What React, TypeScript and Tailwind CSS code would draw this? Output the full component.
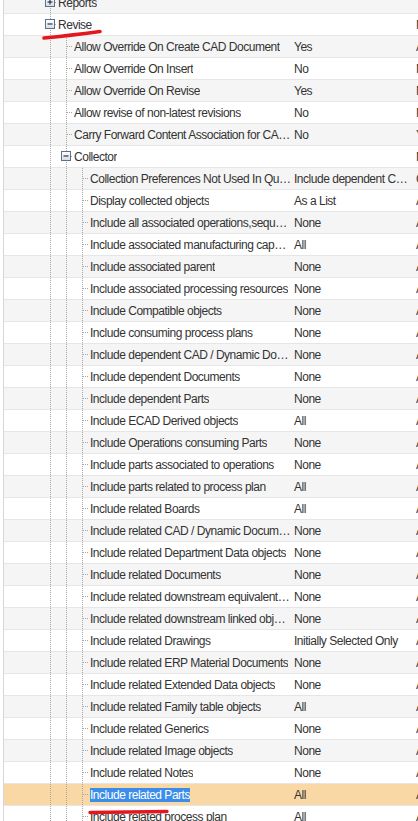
import React from "react";

type Row = {
  level: number;
  label: string;
  val?: string;
  c3?: string;
  icon?: "plus" | "minus";
  selected?: boolean;
};

const rows: Row[] = [
  { level: 0, label: "Reports", icon: "plus", c3: "" },
  { level: 0, label: "Revise", icon: "minus", c3: "N" },
  { level: 1, label: "Allow Override On Create CAD Document", val: "Yes", c3: "A" },
  { level: 1, label: "Allow Override On Insert", val: "No", c3: "N" },
  { level: 1, label: "Allow Override On Revise", val: "Yes", c3: "N" },
  { level: 1, label: "Allow revise of non-latest revisions", val: "No", c3: "N" },
  { level: 1, label: "Carry Forward Content Association for CA…", val: "No", c3: "Y" },
  { level: 1, label: "Collector", icon: "minus", c3: "N" },
  { level: 2, label: "Collection Preferences Not Used In Qu…", val: "Include dependent C…", c3: "C" },
  { level: 2, label: "Display collected objects", val: "As a List", c3: "A" },
  { level: 2, label: "Include all associated operations,sequ…", val: "None", c3: "A" },
  { level: 2, label: "Include associated manufacturing cap…", val: "All", c3: "A" },
  { level: 2, label: "Include associated parent", val: "None", c3: "A" },
  { level: 2, label: "Include associated processing resources", val: "None", c3: "A" },
  { level: 2, label: "Include Compatible objects", val: "None", c3: "A" },
  { level: 2, label: "Include consuming process plans", val: "None", c3: "A" },
  { level: 2, label: "Include dependent CAD / Dynamic Do…", val: "None", c3: "A" },
  { level: 2, label: "Include dependent Documents", val: "None", c3: "A" },
  { level: 2, label: "Include dependent Parts", val: "None", c3: "A" },
  { level: 2, label: "Include ECAD Derived objects", val: "All", c3: "A" },
  { level: 2, label: "Include Operations consuming Parts", val: "None", c3: "A" },
  { level: 2, label: "Include parts associated to operations", val: "None", c3: "A" },
  { level: 2, label: "Include parts related to process plan", val: "All", c3: "A" },
  { level: 2, label: "Include related Boards", val: "All", c3: "A" },
  { level: 2, label: "Include related CAD / Dynamic Docum…", val: "None", c3: "A" },
  { level: 2, label: "Include related Department Data objects", val: "None", c3: "A" },
  { level: 2, label: "Include related Documents", val: "None", c3: "A" },
  { level: 2, label: "Include related downstream equivalent…", val: "None", c3: "A" },
  { level: 2, label: "Include related downstream linked obj…", val: "None", c3: "A" },
  { level: 2, label: "Include related Drawings", val: "Initially Selected Only", c3: "A" },
  { level: 2, label: "Include related ERP Material Documents", val: "None", c3: "A" },
  { level: 2, label: "Include related Extended Data objects", val: "None", c3: "A" },
  { level: 2, label: "Include related Family table objects", val: "All", c3: "A" },
  { level: 2, label: "Include related Generics", val: "None", c3: "A" },
  { level: 2, label: "Include related Image objects", val: "None", c3: "A" },
  { level: 2, label: "Include related Notes", val: "None", c3: "A" },
  { level: 2, label: "Include related Parts", val: "All", c3: "A", selected: true },
  { level: 2, label: "Include related process plan", val: "All", c3: "A" },
];

const DOT = "#a8a8a8";

function Unit({ kind, icon }: { kind: "pipe" | "branch"; icon?: "plus" | "minus" }) {
  return (
    <svg width="16" height="21" viewBox="0 0 16 21" className="block shrink-0">
      <line x1="8.5" y1="0" x2="8.5" y2="21" stroke={DOT} strokeWidth="1" strokeDasharray="1 1" />
      {kind === "branch" && (
        <line x1="9" y1="10.5" x2="15" y2="10.5" stroke={DOT} strokeWidth="1" strokeDasharray="1 1" />
      )}
      {icon && (
        <g>
          <defs>
            <linearGradient id="boxg" x1="0" y1="0" x2="0" y2="1">
              <stop offset="0" stopColor="#ffffff" />
              <stop offset="1" stopColor="#d6dbe4" />
            </linearGradient>
          </defs>
          <rect x="3.5" y="5.5" width="9" height="9" fill="url(#boxg)" stroke="#5d6f8e" strokeWidth="1" />
          <line x1="5.5" y1="10" x2="10.5" y2="10" stroke="#2b3548" strokeWidth="1.2" />
          {icon === "plus" && (
            <line x1="8" y1="7.5" x2="8" y2="12.5" stroke="#2b3548" strokeWidth="1.2" />
          )}
        </g>
      )}
    </svg>
  );
}

function TreeRow({ r, idx }: { r: Row; idx: number }) {
  const bg = r.selected ? "bg-[#fad8a5]" : idx % 2 === 0 ? "bg-[#f5f5f5]" : "bg-white";
  const units: React.ReactNode[] = [];
  for (let i = 0; i < r.level; i++) units.push(<Unit key={i} kind="pipe" />);
  units.push(<Unit key="b" kind="branch" icon={r.icon} />);
  return (
    <div className={`flex h-[22px] items-center border-b border-[#e6e6e6] ${bg}`}>
      <div className="flex h-full w-[286px] shrink-0 items-center overflow-hidden pl-[38px]">
        {units}
        <span className="overflow-hidden whitespace-nowrap">
          {r.selected ? (
            <span className="bg-[#3b8de9] py-[1px] text-white">{r.label}</span>
          ) : (
            r.label
          )}
        </span>
      </div>
      <div className="w-[123px] shrink-0 overflow-hidden whitespace-nowrap pl-[4px]">{r.val ?? ""}</div>
      <div className="shrink-0 whitespace-nowrap pl-[3px]">{r.c3 ?? ""}</div>
    </div>
  );
}

export default function App() {
  return (
    <div
      className="relative h-[821px] w-[418px] overflow-hidden bg-white text-[12px] leading-[14px] tracking-[-0.48px] text-[#333333]"
      style={{ fontFamily: '"Liberation Sans", Arial, sans-serif' }}
    >
      <div className="ml-[3px] mt-[-8px] border-l border-[#d6d6d6]">
        {rows.map((r, i) => (
          <TreeRow key={i} r={r} idx={i} />
        ))}
      </div>
      <svg className="pointer-events-none absolute left-0 top-0" width="418" height="821">
        <path d="M44 38 Q70 35.5 100 31.5" stroke="#e3171f" strokeWidth="3.6" fill="none" strokeLinecap="round" />
        <path d="M90 812.5 L167 811.5" stroke="#e3171f" strokeWidth="3.4" fill="none" strokeLinecap="round" />
      </svg>
    </div>
  );
}
